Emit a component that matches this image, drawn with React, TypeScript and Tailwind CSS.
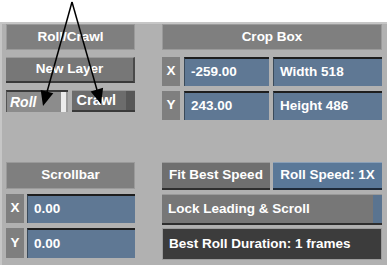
import React from 'react'

const font = { fontFamily: '"Liberation Sans", Arial, sans-serif' }

const Header = ({ label, h }: { label: string; h: string }) => (
    <div className={`${h} flex items-center justify-center bg-[#7f7f7f] border border-[#9a9a9a] text-white font-bold text-[13.5px]`}>
        {label}
    </div>
)

const Field = ({ value, className = '' }: { value: string; className?: string }) => (
    <div className={`flex items-center bg-[#5f7894] border-t-2 border-t-[#1e1e1e] border-l border-l-[#3a4a5a] pl-[6px] text-white font-bold text-[13.5px] ${className}`}>
        {value}
    </div>
)

const Label = ({ text }: { text: string }) => (
    <div className="w-[18px] flex items-center justify-center bg-[#7f7f7f] text-white font-bold text-[13.5px]">
        {text}
    </div>
)

const Arrows = () => (
    <svg className="absolute left-0 top-0 pointer-events-none" width="387" height="265">
        <line x1="72" y1="2" x2="47" y2="92" stroke="black" strokeWidth="1.5" />
        <line x1="72" y1="2" x2="97" y2="90" stroke="black" strokeWidth="1.5" />
        <polygon points="43,106 40.7,89.9 53.3,93.3" fill="black" />
        <polygon points="101,104 90.6,91.4 103.1,87.8" fill="black" />
    </svg>
)

const App: React.FC = () => {
    return (
        <div className="relative w-[387px] h-[265px] bg-white overflow-hidden" style={font}>
            <div className="mt-[22px] h-[243px] bg-[#b1b1b1] border-t-2 border-l-2 border-[#c6c6c6] pl-[4px]">
                {/* top section */}
                <div className="flex gap-[27px]">
                    <div className="w-[129px] flex flex-col">
                        <Header label="Roll/Crawl" h="h-[26px]" />
                        <div className="mt-[7px] h-[26px] flex items-center justify-center bg-[#777777] border-t border-t-[#9a9a9a] border-b-2 border-b-[#3a3a3a] border-r-2 border-r-[#4a4a4a] text-white font-bold text-[13.5px]">
                            New Layer
                        </div>
                        <div className="mt-[7px] h-[22px] flex gap-[4px]">
                            <div className="w-[62px] flex border-t-2 border-t-[#3a3a3a] border-l border-l-[#555]">
                                <div className="flex-1 flex items-center pl-[3px] bg-[#8c8c8c] text-white font-bold italic text-[14px]">
                                    Roll
                                </div>
                                <div className="w-[5px] bg-[#ececec]"></div>
                                <div className="w-[2px] bg-[#9a9a9a]"></div>
                            </div>
                            <div className="w-[64px] flex border-b-2 border-b-[#3a3a3a] border-t border-t-[#999]">
                                <div className="flex-1 flex items-center pl-[5px] bg-[#6c6c6c] text-white font-bold text-[14.5px]">
                                    Crawl
                                </div>
                                <div className="w-[9px] bg-[#575757]"></div>
                            </div>
                        </div>
                    </div>
                    <div className="w-[220px] flex flex-col">
                        <Header label="Crop Box" h="h-[26px]" />
                        <div className="mt-[7px] h-[29px] flex">
                            <Label text="X" />
                            <Field value="-259.00" className="ml-[4px] w-[85px]" />
                            <Field value="Width 518" className="ml-[4px] flex-1" />
                        </div>
                        <div className="mt-[5px] h-[29px] flex">
                            <Label text="Y" />
                            <Field value="243.00" className="ml-[4px] w-[85px]" />
                            <Field value="Height 486" className="ml-[4px] flex-1" />
                        </div>
                    </div>
                </div>

                {/* bottom section */}
                <div className="mt-[42px] flex gap-[27px]">
                    <div className="w-[129px] flex flex-col">
                        <Header label="Scrollbar" h="h-[27px]" />
                        <div className="mt-[5px] h-[29px] flex">
                            <Label text="X" />
                            <Field value="0.00" className="ml-[3px] flex-1" />
                        </div>
                        <div className="mt-[5px] h-[30px] flex">
                            <Label text="Y" />
                            <Field value="0.00" className="ml-[3px] flex-1" />
                        </div>
                    </div>
                    <div className="w-[220px] flex flex-col">
                        <div className="h-[28px] flex gap-[3px]">
                            <div className="w-[108px] flex items-center justify-center bg-[#6f6f6f] border-t border-t-[#999] border-b-2 border-b-[#2e2e2e] text-white font-bold text-[13.5px]">
                                Fit Best Speed
                            </div>
                            <div className="flex-1 flex items-center justify-center bg-[#5a7898] border-t border-t-[#8aa0b8] border-b-2 border-b-[#1e2a38] text-white font-bold text-[13.5px]">
                                Roll Speed: 1X
                            </div>
                        </div>
                        <div className="mt-[4px] h-[31px] flex border-b-2 border-b-[#2e2e2e] border-t border-t-[#999]">
                            <div className="flex-1 flex items-center pl-[6px] bg-[#777777] text-white font-bold text-[13.5px]">
                                Lock Leading &amp; Scroll
                            </div>
                            <div className="w-[9px] bg-[#5a7490]"></div>
                        </div>
                        <div className="mt-[3px] h-[32px] flex items-center pl-[6px] bg-[#3c3c3c] border border-[#9c9c9c] text-white font-bold text-[13.5px]">
                            Best Roll Duration: 1 frames
                        </div>
                    </div>
                </div>
            </div>
            <Arrows />
        </div>
    )
}

export default App
